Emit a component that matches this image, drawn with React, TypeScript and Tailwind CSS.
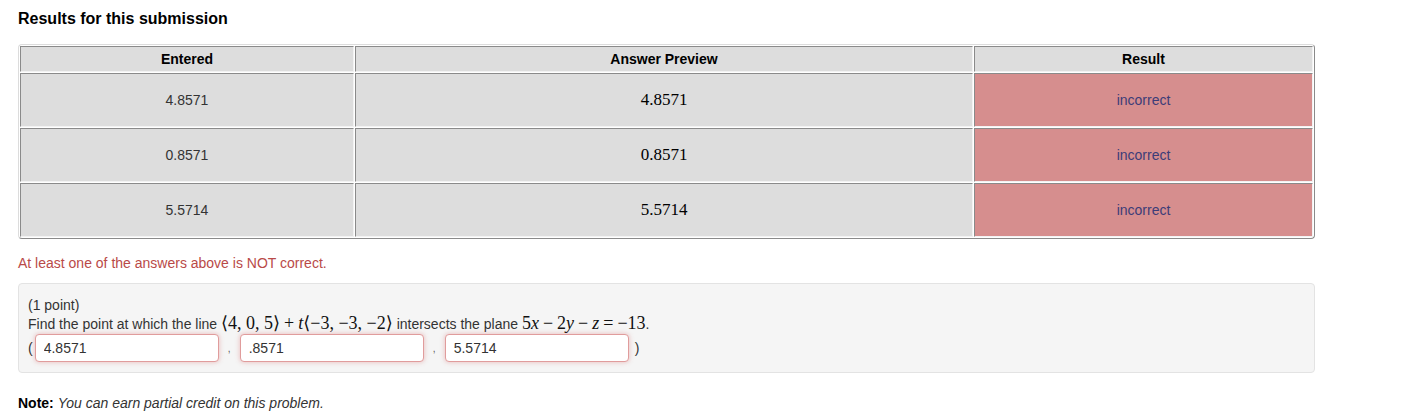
import React from 'react';

const rows = [
  { entered: '4.8571', preview: '4.8571', result: 'incorrect' },
  { entered: '0.8571', preview: '0.8571', result: 'incorrect' },
  { entered: '5.5714', preview: '5.5714', result: 'incorrect' },
];

const cell = 'border border-t-[#8a8a8a] border-l-[#8a8a8a] border-b-[#f2f2f2] border-r-[#f2f2f2] text-center';

function Math({ children }: { children: React.ReactNode }) {
  return <span className="font-['Liberation_Serif','DejaVu_Serif',serif] text-[18px] leading-[14px] text-[#111]">{children}</span>;
}

function Op({ children }: { children: React.ReactNode }) {
  return <span className="mx-[4px]">{children}</span>;
}

export default function App() {
  const answers = ['4.8571', '.8571', '5.5714'];
  return (
    <div className="min-h-[420px] bg-white font-['Liberation_Sans',Arial,sans-serif] text-[14px] text-[#333] pl-[18px] pt-[9px]">
      <div className="w-[1297px]">
        <h3 className="text-[16px] leading-[20px] font-bold text-black">Results for this submission</h3>

        <table className="mt-[15px] w-full border-separate border-spacing-[1px] border border-t-[#dcdcdc] border-l-[#dcdcdc] border-b-[#8a8a8a] border-r-[#8a8a8a] rounded-[4px]">
          <thead>
            <tr className="h-[26px]">
              <th className={`${cell} w-[334px] bg-[#dddddd] font-bold text-black`}>Entered</th>
              <th className={`${cell} w-[618px] bg-[#dddddd] font-bold text-black`}>Answer Preview</th>
              <th className={`${cell} bg-[#dddddd] font-bold text-black`}>Result</th>
            </tr>
          </thead>
          <tbody>
            {rows.map((r, i) => (
              <tr key={i} className="h-[54px]">
                <td className={`${cell} bg-[#dddddd] text-[#333]`}>{r.entered}</td>
                <td className={`${cell} bg-[#dddddd]`}>
                  <span className="font-['Liberation_Serif','DejaVu_Serif',serif] text-[17px] text-black">{r.preview}</span>
                </td>
                <td className={`${cell} bg-[#d68e8e] text-[#3c3c78]`}>{r.result}</td>
              </tr>
            ))}
          </tbody>
        </table>

        <p className="mt-[14px] leading-[20px] text-[#b94a48]">At least one of the answers above is NOT correct.</p>

        <div className="mt-[10px] rounded-[4px] border border-[#e3e3e3] bg-[#f5f5f5] pl-[9px] pt-[12px] pb-[10px] leading-[19px]">
          <div>(1 point)</div>
          <div>
            Find the point at which the line{' '}
            <Math>
              ⟨4, 0, 5⟩<Op>+</Op><i>t</i>⟨−3, −3, −2⟩
            </Math>{' '}
            intersects the plane{' '}
            <Math>
              5<i>x</i><Op>−</Op>2<i>y</i><Op>−</Op><i>z</i><Op>=</Op>−13
            </Math>
            .
          </div>
          <div className="flex items-center">
            <span>(</span>
            {answers.map((a, i) => (
              <React.Fragment key={i}>
                {i > 0 && <span className="w-[21px] text-center text-[10px] text-[#555]">,</span>}
                <input
                  readOnly
                  value={a}
                  className={`${i === 0 ? 'ml-[2px]' : ''} h-[28px] w-[184px] rounded-[4px] border border-[#e09c9c] bg-white pl-[8px] text-[14px] text-[#333] shadow-[0_0_5px_rgba(210,70,70,0.35)] outline-none`}
                />
              </React.Fragment>
            ))}
            <span className="ml-[6px]">)</span>
          </div>
        </div>

        <p className="mt-[20px] leading-[20px] text-[#333]">
          <b className="text-black">Note:</b> <i>You can earn partial credit on this problem.</i>
        </p>
      </div>
    </div>
  );
}
